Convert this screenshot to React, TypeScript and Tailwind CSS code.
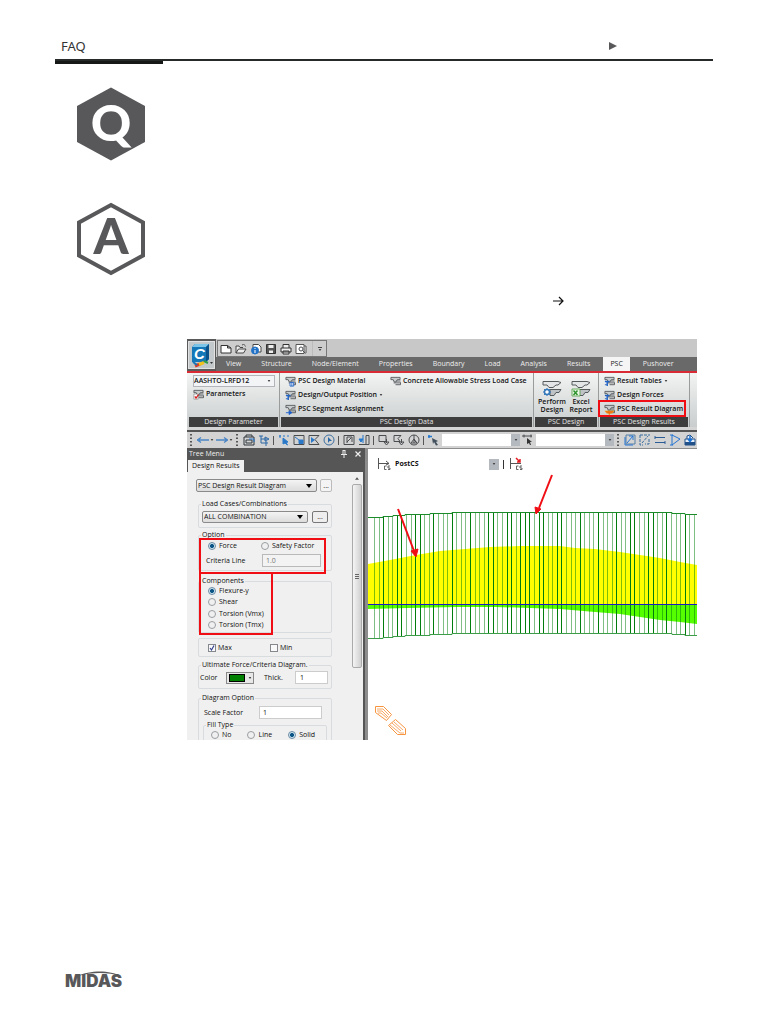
import type { ReactNode } from "react";

const uiText = "font-['Open_Sans','Liberation_Sans',sans-serif] text-[7px] leading-[8px] text-[#111]";

const tabs = [
  "View",
  "Structure",
  "Node/Element",
  "Properties",
  "Boundary",
  "Load",
  "Analysis",
  "Results",
  "PSC",
  "Pushover",
];

const darkBars = [
  2, 5, 6, 9, 10, 13, 17, 21, 25, 26, 29, 30, 32, 33, 34, 36, 37, 40, 41, 45,
  49, 53, 56, 57, 60, 61, 64, 68,
];

// [x, top outline, bottom outline] of each stepped segment
const envelope = [
  [0, 46, 167],
  [15, 45, 166],
  [25, 44, 165],
  [37, 43, 164],
  [62, 42, 163],
  [84, 41, 162],
  [304, 42, 163],
  [317, 43, 164],
  [329, 43, 164],
];

function envelopeAt(x: number) {
  let found = envelope[0];
  for (const step of envelope) {
    if (step[0] <= x) found = step;
  }
  return found;
}

function steppedPath(column: number) {
  return envelope
    .map((step, i) =>
      i === 0 ? `M0 ${step[column]}.5` : `H${step[0]}V${step[column]}.5`,
    )
    .join("");
}

type GirderKind = "pen" | "table" | "arrow" | "check" | "result" | "plain";

function GirderIcon({ kind }: { kind: GirderKind }) {
  return (
    <svg viewBox="0 0 12 12" className="size-[11px] shrink-0" fill="none">
      <path d="M1 1.5h10v2.500H8L6.500 6.500H4.500L3.500 4H1z" fill="#c9cccd" stroke="#4d5154" strokeWidth=".9" />
      <path d="M4 7.500h7.500M7 5.500h4.500M6 9.500h5.500V7" stroke="#55595c" />
      {kind === "pen" && <path d="M5.500 7h4v4h-4zM7.500 7v4" stroke="#2163c4" fill="#fff" />}
      {kind === "table" && (
        <>
          <path d="M1 6h5M3.500 6v5" stroke="#2163c4" strokeWidth="1.600" />
          <path d="M1 9.500h2" stroke="#2163c4" />
        </>
      )}
      {kind === "arrow" && <path d="M1 9.500h5M4.500 7.500l3 2-3 2z" stroke="#1a5fd0" fill="#1a5fd0" />}
      {kind === "check" && (
        <>
          <rect x="1" y="5.500" width="4.500" height="5.500" fill="#fff" stroke="#777" strokeWidth=".6" />
          <path d="m2 8 1.300 2L6 6" stroke="#d81e1e" strokeWidth="1.300" />
        </>
      )}
      {kind === "result" && <path d="M1 7.500h10L9 10H7l-1 2-1.500-2H3z" fill="#ee6b16" stroke="#f3b21b" strokeWidth=".6" />}
    </svg>
  );
}

function LargeGirder({ accent }: { accent: "blue" | "green" }) {
  return (
    <svg viewBox="0 0 20 17" className="h-[17px] w-5" fill="none">
      <path d="M1 1.500h15l3 1-3 2.500h-2l-3 2.500H7L5 5H1z" fill="#e3e5e6" stroke="#555a5d" />
      <path d="M8 9.500h11l-2 3h-3l-2 3H8z" fill="#bfc3c5" stroke="#555a5d" />
      {accent === "blue" ? (
        <>
          <circle cx="5" cy="12" r="2.500" fill="#fff" stroke="#3579bb" strokeWidth="1.500" />
          <path d="M5 8v2M5 14v2M1 12h2M7 12h2M2 9l1.500 1.500M8 9l-1.500 1.500M2 15l1.500-1.500M8 15l-1.500-1.500" stroke="#3579bb" />
        </>
      ) : (
        <>
          <path d="M1 9h8v7H1z" fill="#e9f6e5" stroke="#4e9c43" strokeWidth=".8" />
          <path d="m2.500 10.500 4 4.500M6.500 10.500l-4 4.500" stroke="#2d922d" strokeWidth="1.500" />
        </>
      )}
    </svg>
  );
}

function RibbonItem({ kind, children }: { kind: GirderKind; children: ReactNode }) {
  return (
    <button type="button" className="flex h-3.5 items-center gap-[2px] whitespace-nowrap">
      <GirderIcon kind={kind} />
      {children}
    </button>
  );
}

function RibbonGroup({ label, className, children }: { label: string; className: string; children: ReactNode }) {
  return (
    <section className={`flex flex-col border-r border-[#9a9c9c] ${className}`}>
      <div className="flex h-11 pt-px">{children}</div>
      <h3 className="mr-px h-[10px] bg-[#3d3d3d] text-center leading-[10px] font-medium whitespace-nowrap text-[#e6e6e6]">
        {label}
      </h3>
    </section>
  );
}

function Caret() {
  return (
    <svg viewBox="0 0 6 4" className="h-1 w-1.5 shrink-0">
      <path d="M0 0h6L3 4z" fill="#000" />
    </svg>
  );
}

function TinyCaret() {
  return (
    <svg viewBox="0 0 4 3" className="h-[2px] w-[4px] shrink-0">
      <path d="M0 0h4L2 3z" fill="#444" />
    </svg>
  );
}

function Grip() {
  return (
    <svg viewBox="0 0 2 12" className="mx-[3px] h-3 w-[2px] shrink-0">
      <path d="M1 0v12" stroke="#555" strokeWidth="2" strokeDasharray="1.500 2" />
    </svg>
  );
}

function Divider() {
  return <span className="mx-[2px] h-[9px] w-px shrink-0 bg-[#555]" />;
}

function ToolButton({ label, children }: { label: string; children: ReactNode }) {
  return (
    <button type="button" aria-label={label} className="flex w-[15px] shrink-0 justify-center">
      <svg viewBox="0 0 12 12" className="size-3" fill="none" stroke="#4a4d50">
        {children}
      </svg>
    </button>
  );
}

function ToolCombo({ label }: { label: string }) {
  return (
    <div className="ml-px flex h-3 min-w-0 flex-1 bg-white">
      <select aria-label={label} className="min-w-0 flex-1 appearance-none outline-none" />
      <span className="flex w-[9px] items-center justify-center bg-[#b3b9bf]">
        <TinyCaret />
      </span>
    </div>
  );
}

function PanelSelect({ label, value, className = "" }: { label: string; value: string; className?: string }) {
  return (
    <div className={`flex items-center rounded-[2px] border border-[#8a8a8a] bg-linear-to-b from-[#f4f4f4] to-[#dcdcdc] pr-1 ${className}`}>
      <select aria-label={label} className="h-full min-w-0 flex-1 appearance-none pl-px outline-none">
        <option>{value}</option>
      </select>
      <Caret />
    </div>
  );
}

function Group({ title, className = "", children }: { title: string; className?: string; children: ReactNode }) {
  return (
    <fieldset className={`min-w-0 rounded-[2px] border border-[#d9dcdf] ${className}`}>
      <legend className="ml-[2px] h-2 px-px whitespace-nowrap">{title}</legend>
      {children}
    </fieldset>
  );
}

function Radio({ name, label, checked }: { name: string; label: string; checked?: boolean }) {
  return (
    <label className="flex h-[11px] items-center gap-[3px] whitespace-nowrap">
      <input
        type="radio"
        name={name}
        defaultChecked={checked}
        className="size-2 appearance-none rounded-full border border-[#9a9ea2] bg-[#f0f0f0] checked:border-[#6d8ba3] checked:bg-[radial-gradient(circle,#0c5586_40%,#cfe6f2_55%)]"
      />
      {label}
    </label>
  );
}

function Checkbox({ label, checked }: { label: string; checked?: boolean }) {
  return (
    <label className="flex items-center gap-[2px]">
      <span className="relative size-2">
        <input
          type="checkbox"
          defaultChecked={checked}
          className="block size-2 appearance-none border border-[#85898d] bg-[#f9f9f9]"
        />
        {checked && (
          <svg viewBox="0 0 8 8" className="pointer-events-none absolute inset-0 size-2" fill="none">
            <path d="M2 4l1.500 2L6 1.500" stroke="#33418f" strokeWidth="1.200" />
          </svg>
        )}
      </span>
      {label}
    </label>
  );
}

function AppLogo() {
  return (
    <button type="button" aria-label="Application menu" className="flex h-8 w-[29px] shrink-0 justify-center bg-[#5a5a5a] pt-[2px]">
      <svg viewBox="0 0 27 28" className="h-7 w-[27px]">
        <rect x=".5" y=".5" width="26" height="27" fill="#c3c8cb" stroke="#e2e2e2" />
        <path d="M4 6l3-3h14v15l-3 3H4z" fill="#1477b8" />
        <path d="M4 6l3-3h14l-3 3z" fill="#7cc5e8" />
        <path d="M18 6l3-3v15l-3 3z" fill="#0b528a" />
        <text x="6" y="18" className="font-['Liberation_Sans',sans-serif] text-[15px] font-bold italic" fill="#fff">C</text>
        <path d="M7 25l5-2" stroke="#e03a23" strokeWidth="3" />
        <path d="M11 23.500l5-2" stroke="#f1c21b" strokeWidth="3" />
        <path d="M16 20l4 2" stroke="#2a9c47" strokeWidth="2" />
        <path d="M5 21l4 3" stroke="#1477b8" strokeWidth="2" />
        <path d="M22 21h3l-1.500 2z" fill="#333" />
      </svg>
    </button>
  );
}

function QuickAccess() {
  return (
    <div className="mt-px ml-px flex h-[17px] w-[110px] items-center border border-[#777] bg-[#cdcdcd]">
      <ToolButton label="New">
        <path d="M1 2.500h6.500L11 5v5H1zM7.500 2.500V5H11" fill="#fff" stroke="#333" />
      </ToolButton>
      <ToolButton label="Open">
        <path d="M1 10V3h3l1 1.500h3M1 10l2.500-4H11L8.500 10zM7 2c2-1 3 0 3.500 1.500" fill="#eee" stroke="#444" />
      </ToolButton>
      <ToolButton label="Recent">
        <path d="M3 1.500h5.500L11 4v5H3z" fill="#fff" stroke="#444" />
        <circle cx="5" cy="7.500" r="3.500" fill="#2272c8" stroke="#2272c8" />
        <path d="M5 5v1M5 7v3" stroke="#fff" />
      </ToolButton>
      <ToolButton label="Save">
        <path d="M1.500 1.500h9v9h-9z" fill="#555" stroke="#333" />
        <path d="M3.500 2h5v3h-5zM4 7.500h4V10H4z" fill="#eee" stroke="none" />
      </ToolButton>
      <ToolButton label="Print">
        <path d="M3 5V1.500h6V5M1 5h10v4H1zM3 8h6v3H3z" fill="#eee" stroke="#333" />
      </ToolButton>
      <ToolButton label="Preview">
        <path d="M1 1.500h8v9H1zM9 3h2v7" fill="#fff" stroke="#555" />
        <circle cx="6" cy="6" r="2" fill="#fff" />
        <path d="M7.500 7.500l3 3" />
      </ToolButton>
      <span className="ml-auto flex w-3.5 flex-col items-center gap-px self-stretch border-l border-[#bbb] pt-[6px]">
        <span className="h-px w-1 bg-[#444]" />
        <TinyCaret />
      </span>
    </div>
  );
}

function Ribbon() {
  return (
    <header className="font-semibold">
      <div className="flex bg-[#c8c8c8]">
        <AppLogo />
        <div className="flex min-w-0 flex-1 flex-col">
          <QuickAccess />
          <nav className="flex h-3.5 gap-[2px] bg-[#696969] pl-px font-medium">
            {tabs.map((tab) => (
              <button
                key={tab}
                type="button"
                className={
                  tab === "PSC"
                    ? "mx-[2px] bg-[#f5f5f5] px-[7px] text-[#222]"
                    : "px-[9px] text-[#eee]"
                }
              >
                {tab}
              </button>
            ))}
          </nav>
        </div>
      </div>
      <div className="flex border-t-2 border-[#d92b35] bg-linear-to-b from-[#f3f4f4] to-[#c9cdcd]">
        <RibbonGroup label="Design Parameter" className="w-[93px] pl-[2px]">
          <div className="flex flex-1 flex-col px-1">
            <div className="mt-px flex h-3 items-center border border-[#b2b6ba] bg-[#f3f4f5] pr-[3px]">
              <select aria-label="Design code" className="min-w-0 flex-1 appearance-none outline-none">
                <option>AASHTO-LRFD12</option>
              </select>
              <TinyCaret />
            </div>
            <RibbonItem kind="check">Parameters</RibbonItem>
          </div>
        </RibbonGroup>
        <RibbonGroup label="PSC Design Data" className="flex-1 pl-px">
          <div className="ml-1 w-[105px]">
            <RibbonItem kind="pen">PSC Design Material</RibbonItem>
            <RibbonItem kind="table">
              Design/Output Position <TinyCaret />
            </RibbonItem>
            <RibbonItem kind="arrow">PSC Segment Assignment</RibbonItem>
          </div>
          <div>
            <RibbonItem kind="plain">Concrete Allowable Stress Load Case</RibbonItem>
          </div>
        </RibbonGroup>
        <RibbonGroup label="PSC Design" className="w-[65px] pl-px">
          <button type="button" className="mt-[6px] flex w-[34px] flex-col items-center">
            <LargeGirder accent="blue" />
            <span className="mt-px">Perform<br />Design</span>
          </button>
          <button type="button" className="mt-[6px] flex w-6 flex-col items-center">
            <LargeGirder accent="green" />
            <span className="mt-px">Excel<br />Report</span>
          </button>
        </RibbonGroup>
        <RibbonGroup label="PSC Design Results" className="w-[91px] pl-px">
          <div className="relative ml-[4px]">
            <RibbonItem kind="table">
              Result Tables <TinyCaret />
            </RibbonItem>
            <RibbonItem kind="table">Design Forces</RibbonItem>
            <RibbonItem kind="result">PSC Result Diagram</RibbonItem>
            <span className="pointer-events-none absolute bottom-0 -left-[6px] h-[17px] w-[88px] border-2 border-[#f00d14]" />
          </div>
        </RibbonGroup>
        <div className="w-[7px]" />
      </div>
      <div className="h-[5px] border-b-2 border-[#555] bg-[#d5d5d5]" />
    </header>
  );
}

function Toolbar() {
  return (
    <div className="flex h-4 items-center bg-[#d3d3d3]" role="toolbar">
      <Grip />
      <ToolButton label="Undo"><path d="M0 6h12M4 3.500L.500 6 4 8.500" stroke="#4b86c5" strokeWidth="1.300" /></ToolButton>
      <TinyCaret />
      <ToolButton label="Redo"><path d="M0 6h12M8 3.500L11.500 6 8 8.500" stroke="#4b86c5" strokeWidth="1.300" /></ToolButton>
      <TinyCaret />
      <Grip />
      <ToolButton label="Select window"><path d="M1 3h10v8H1zM3 3V1h6v2M3 6h6v3H3z" stroke="#31363c" /><path d="M6 5h5v3" stroke="#2676cc" /></ToolButton>
      <ToolButton label="Model tree"><path d="M1 2h4M3 2v7h3M3 5h6M7 3l4 2-4 2zM6 9h4M8 7v5" stroke="#2b68a7" /></ToolButton>
      <Divider />
      <ToolButton label="Select single"><path d="M1 2h2M5 2h2M9 2h2M2 1v3" stroke="#2b78c9" /><path d="M5 4l5 4-2 .500L9.500 11 7 9l-2 1z" fill="#2b78c9" stroke="#2b78c9" /></ToolButton>
      <ToolButton label="Select by box"><path d="M1 1.500h10v9H1z" /><path d="M2 3l4 3M6 6h4v3.500H6z" fill="#2b78c9" stroke="#2b78c9" /></ToolButton>
      <ToolButton label="Select polygon"><path d="M1 1.500h10l-4 4 4 5H1z" /><path d="M3 3l4 3-4 3z" fill="#2b78c9" stroke="none" /></ToolButton>
      <ToolButton label="Select circle"><circle cx="6" cy="6" r="5" stroke="#3d6f9f" /><path d="M5 3v6l1.500-2H9z" fill="#2b68a7" stroke="none" /></ToolButton>
      <Divider />
      <ToolButton label="Select plane"><path d="M1 1.500h10v9H1zM4 3v6M4 3h5v5M4 8l4-4" /></ToolButton>
      <ToolButton label="Select volume"><path d="M8 1.500h3v9H8zM1 10.500h7" /><path d="M5 1v8M1 5h4L3 8z" fill="#2478cd" stroke="#2478cd" /></ToolButton>
      <Divider />
      <ToolButton label="Deselect box"><path d="M1 1.500h7v6H1zM6 8h5L8.500 11zM8.500 5v4" /></ToolButton>
      <ToolButton label="Deselect polygon"><path d="M1 1.500h7l-3 3 2 3H1zM6 8h5L8.500 11zM8.500 5v4" /></ToolButton>
      <ToolButton label="Deselect circle"><circle cx="6" cy="6" r="5" /><path d="M6 1v8M3 9l3-4 3 4zM6 6l3 3" /></ToolButton>
      <Divider />
      <ToolButton label="Identify"><path d="M1 1v3M0 2.500h4" stroke="#2478cd" strokeWidth="1.500" /><path d="M4 4l6 3-2 1 2 3-2 .500L6 8l-1 2z" fill="#43515e" stroke="none" /></ToolButton>
      <ToolCombo label="Selection" />
      <ToolButton label="Pick"><path d="M0 2h10M2 .500v3M9 .500v3" /><path d="M5 4l5 4H8l1 3H8L7 9l-2 1z" fill="#333" stroke="none" /></ToolButton>
      <ToolCombo label="Named group" />
      <Grip />
      <ToolButton label="Active"><path d="M2 1h9v9H2z" stroke="#577ea3" /><path d="M1 3v8h8M3 9l6-7M5 2h4v4" stroke="#2574d2" /></ToolButton>
      <ToolButton label="Inactive"><path d="M1 1h10M1 1v10h3M3 9l6-7M10 5v5H6" stroke="#3a6d9f" strokeDasharray="3 1" /></ToolButton>
      <ToolButton label="Section"><path d="M1 3.500h10M1 8.500h10M1 2v3M11 7v3" stroke="#2c5c96" /></ToolButton>
      <ToolButton label="Polygon"><path d="M3 1l8 4-8 6zM1 1h3M1 11h3" stroke="#2574d2" /></ToolButton>
      <ToolButton label="Store view"><path d="M1 5h10v6H1zM3 5V2l3-1 3 3" fill="#e6eef7" stroke="#22518a" /><path d="M1 8h10v3H1z" fill="#22518a" stroke="none" /><path d="M6 2v4M4 5l2 2.500L8 5" stroke="#1670d6" strokeWidth="1.500" /></ToolButton>
    </div>
  );
}

function DesignResultPanel() {
  return (
    <aside className="flex w-[178px] shrink-0 flex-col bg-[#565656]">
      <div className="flex h-3 items-center pr-1 pl-[2px] text-[#eee]">
        <h2 className="flex-1">Tree Menu</h2>
        <button type="button" aria-label="Pin" className="mr-2">
          <svg viewBox="0 0 6 8" className="h-2 w-1.5" fill="none" stroke="currentColor"><path d="M2 0v4M4 0v4M2 .500h2M0 4.500h6M3 5v3" /></svg>
        </button>
        <button type="button" aria-label="Close">
          <svg viewBox="0 0 6 6" className="size-1.5" fill="none" stroke="currentColor"><path d="M.500.500l5 5M5.500.500l-5 5" strokeWidth="1.200" /></svg>
        </button>
      </div>
      <button type="button" className="ml-px h-3 self-start bg-[#f0f0f0] px-1">Design Results</button>
      <div className="mr-[2px] flex min-h-0 flex-1 overflow-hidden bg-[#f0f0f0]">
        <form className="relative min-w-0 flex-1 self-start pt-[7px] pr-5 pl-[11px]">
          <div className="-ml-[2px] flex h-[13px] gap-[3px]">
            <PanelSelect label="Result type" value="PSC Design Result Diagram" className="w-[123px]" />
            <button type="button" className="w-3 rounded-[2px] border border-[#bbb] bg-[#f4f4f4] leading-[6px]">...</button>
          </div>
          <Group title="Load Cases/Combinations" className="mt-2 h-7">
            <div className="mt-[3px] ml-[3px] flex h-3 gap-1">
              <PanelSelect label="Load case" value="ALL COMBINATION" className="w-[106px]" />
              <button type="button" className="w-4 rounded-[2px] border border-[#777] bg-[#eee] leading-[6px]">...</button>
            </div>
          </Group>
          <Group title="Option" className="mt-[3px] h-10">
            <div className="ml-[9px] flex h-[13px] items-center">
              <div className="w-[53px]"><Radio name="option" label="Force" checked /></div>
              <Radio name="option" label="Safety Factor" />
            </div>
            <label className="mt-[2px] ml-[7px] flex h-[13px] items-center">
              <span className="w-[56px]">Criteria Line</span>
              <input defaultValue="1.0" disabled className="h-[13px] w-[59px] border border-[#b9b9b9] bg-[#f3f3f3] pl-[3px] text-[#777]" />
            </label>
          </Group>
          <Group title="Components" className="mt-[6px] h-14">
            <div className="ml-[9px] grid h-[46px] content-between">
              <Radio name="component" label="Flexure-y" checked />
              <Radio name="component" label="Shear" />
              <Radio name="component" label="Torsion (Vmx)" />
              <Radio name="component" label="Torsion (Tmx)" />
            </div>
          </Group>
          <div className="mt-[5px] flex h-[19px] items-center rounded-[2px] border border-[#d9dcdf] pl-[9px]">
            <div className="w-[62px]"><Checkbox label="Max" checked /></div>
            <Checkbox label="Min" />
          </div>
          <Group title="Ultimate Force/Criteria Diagram." className="mt-1 h-7">
            <div className="mt-[2px] flex h-[13px] items-center pl-px">
              <span className="w-[26px]">Color</span>
              <button type="button" aria-label="Diagram color" className="flex h-3 w-7 items-center gap-[3px] border border-[#888] bg-[#e8e8e8] pl-[2px]">
                <span className="h-2 w-4 border border-black bg-[#008000]" />
                <TinyCaret />
              </button>
              <label className="ml-[10px] flex items-center">
                <span className="w-[31px]">Thick.</span>
                <input defaultValue="1" className="h-[13px] w-[33px] border border-[#ccc] bg-white pl-1" />
              </label>
            </div>
          </Group>
          <Group title="Diagram Option" className="mt-[5px] h-[60px]">
            <label className="mt-1 flex h-[13px] items-center pl-[5px]">
              <span className="w-[55px]">Scale Factor</span>
              <input defaultValue="1" className="h-[13px] w-[63px] border border-[#ccc] bg-white pl-[3px]" />
            </label>
            <Group title="Fill Type" className="mx-1 mt-[2px] h-7">
              <div className="ml-[7px] flex gap-4">
                <Radio name="fill" label="No" />
                <Radio name="fill" label="Line" />
                <Radio name="fill" label="Solid" checked />
              </div>
            </Group>
          </Group>
          <span className="pointer-events-none absolute top-[66px] left-3 h-9 w-[127px] border-2 border-[#f00d14]" />
          <span className="pointer-events-none absolute top-[100px] left-3 h-[63px] w-[74px] border-2 border-[#f00d14]" />
        </form>
        <div className="mr-px flex w-[10px] flex-col items-center pt-[5px]">
          <svg viewBox="0 0 6 4" className="h-[3px] w-1"><path d="M0 4h6L3 0z" fill="#555" /></svg>
          <div className="mt-1 flex h-[184px] w-[10px] shrink-0 flex-col items-center justify-center gap-px rounded-[2px] border border-[#aaa] bg-linear-to-r from-[#f5f5f5] to-[#d0d0d0]">
            <span className="h-px w-1 bg-[#666]" />
            <span className="h-px w-1 bg-[#666]" />
            <span className="h-px w-1 bg-[#666]" />
          </div>
        </div>
      </div>
    </aside>
  );
}

function StageIcon({ red }: { red?: boolean }) {
  return (
    <svg viewBox="0 0 14 14" className="h-3.5 w-3.5 shrink-0" fill="none" stroke="#555">
      <path d="M1.500 1v11M1 6.500h11" />
      <path d="M9.500 9h-2v3.500h2M13 9h-2v2h2v1.500h-2" strokeWidth=".9" />
      {red ? <path d="M7 1l4 4M11 2v3H8" stroke="#e51b23" strokeWidth="1.500" /> : <path d="M9 4l3 2.500L9 8" />}
    </svg>
  );
}

function ResultView() {
  const bars = Array.from({ length: 71 }, (_, i) => Math.round(6 + i * 4.57));

  return (
    <main className="flex min-w-0 flex-1 flex-col border-t border-l-[3px] border-[#8d8d8d] bg-white">
      <div className="mt-2 ml-[9px] flex h-3.5 items-center">
        <StageIcon />
        <select aria-label="Construction stage" className="ml-1 w-[94px] appearance-none font-bold outline-none">
          <option>PostCS</option>
        </select>
        <span className="flex h-[11px] w-[10px] items-center justify-center bg-[#b3b9bf]"><TinyCaret /></span>
        <span className="mr-[5px] ml-1 h-[9px] w-px bg-[#333]" />
        <StageIcon red />
      </div>
      <svg viewBox="0 0 329 269" preserveAspectRatio="none" className="min-h-0 w-full flex-1" fill="none">
        <path d="M0 93L22 89L48 84L72 80L97 78L122 76L152 75H192L207 77L227 78L252 81L272 84L292 87L312 91L329 94V133H0z" fill="#ff0" />
        <path d="M0 134V138L40 137L89 136H127L162 137L192 138L227 141L252 143L272 146L292 149L312 151L329 153V134z" fill="#5f0" />
        {bars.map((x, i) => {
          const [, top, bottom] = envelopeAt(x);
          return (
            <path
              key={x}
              d={`M${x}.5 ${top}V${bottom}`}
              stroke="#007d0c"
              strokeOpacity={darkBars.includes(i) ? 1 : 0.5}
            />
          );
        })}
        <path d={steppedPath(1)} stroke="#1b8a28" />
        <path d={steppedPath(2)} stroke="#3d9c48" />
        <path d="M0 133.500H329" stroke="#1c18c8" />
        <g stroke="#f00d14" strokeWidth="2" fill="#f00d14">
          <path d="M30 38L46 80" />
          <path d="M48 86L43 80L50 78z" strokeWidth="1" />
          <path d="M184 4L171 37" />
          <path d="M168 43L167 36L173 38z" strokeWidth="1" />
        </g>
        <g stroke="#f79440">
          <path d="M7.500 235.500h8l8 8-5 6-11-8z" />
          <path d="M9 238h6l6 6M9 240h5l6 6M10 242h3l6 5" strokeWidth=".8" />
          <path d="M27.500 248.500l10 9v6h-8l-9-9z" />
          <path d="M26 251l9 8M24 252l9 8M22 254l10 8h4" strokeWidth=".8" />
        </g>
      </svg>
    </main>
  );
}

function HexBadge({ letter, filled }: { letter: string; filled?: boolean }) {
  return (
    <svg viewBox="0 0 68 74" className="h-[74px] w-[68px]" role="img" aria-label={letter}>
      {filled ? (
        <path d="M34 0.500L68 19v36L34 73.500L0 55V19z" fill="#58585a" />
      ) : (
        <path d="M34 3L66 20.500v33L34 71L2 53.500v-33z" fill="#fff" stroke="#58585a" strokeWidth="4" />
      )}
      <text
        x="34"
        y={filled ? 54 : 52}
        textAnchor="middle"
        className="font-['Lato',sans-serif] text-[50px] font-black"
        fill={filled ? "#fff" : "#58585a"}
      >
        {letter}
      </text>
    </svg>
  );
}

export default function App() {
  return (
    <div className="min-h-screen bg-white px-[55px] pt-[37px]">
      <header>
        <div className="flex h-[22px] items-start justify-between pr-24 pl-1.5">
          <h1 className="font-['Noto_Sans',sans-serif] text-[13px] leading-[18px] text-[#333]">FAQ</h1>
          <svg viewBox="0 0 8 8" className="mt-[5px] size-2"><path d="M0 0l8 4-8 4z" fill="#58585a" /></svg>
        </div>
        <div className="h-[2px] bg-[#262b29]" />
        <div className="h-[3px] w-[108px] bg-[#151817]" />
      </header>

      <div className="mt-[23px] flex flex-col items-start gap-[41px] pl-[22px]">
        <HexBadge letter="Q" filled />
        <HexBadge letter="A" />
      </div>

      <div className="mt-5 flex justify-end pr-[149px]">
        <svg viewBox="0 0 12 10" className="h-[10px] w-3" fill="none" stroke="#111"><path d="M1 5h10M7 1l4 4-4 4" strokeWidth="1.200" /></svg>
      </div>

      <section className={`mt-[33px] mr-4 ml-[132px] overflow-hidden ${uiText}`}>
        <Ribbon />
        <Toolbar />
        <div className="flex h-[292px]">
          <DesignResultPanel />
          <ResultView />
        </div>
      </section>

      <footer className="relative mt-[230px] ml-[10px] h-[18px] w-[58px]">
        <svg viewBox="0 0 58 18" className="absolute inset-0" fill="none">
          <path d="M13 6C24 0 46 0 55 6C44 2 26 2 13 6z" fill="#58585a" />
        </svg>
        <span className="block pt-[3px] font-['Inter',sans-serif] text-[17px] leading-4 font-black text-[#58585a]">MIDAS</span>
      </footer>
    </div>
  );
}
